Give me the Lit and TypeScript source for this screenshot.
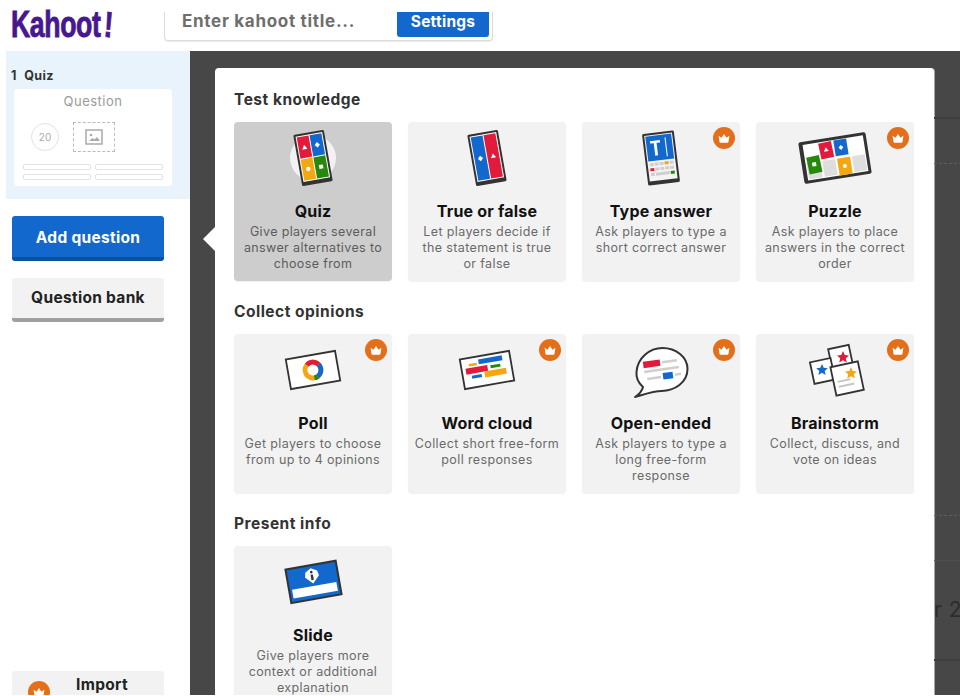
import { LitElement, html, css } from "lit";
import { customElement } from "lit/decorators.js";

const R = "#e21b3c", B = "#1368ce", Y = "#f5a70f", G = "#26890c", D = "#333333";

const crown = html`<svg class="crown" viewBox="0 0 22 22" aria-hidden="true"><circle cx="11" cy="11" r="11" fill="#e46f1b"/><path d="M5.600 8.800l2.900 1.900L11 6.900l2.500 3.800 2.900-1.900-.9 6c-.1.600-.6 1-1.200 1H7.700c-.6 0-1.100-.4-1.200-1z" fill="#fff"/></svg>`;

const icons: Record<string, unknown> = {
  quiz: html`<svg class="ico" viewBox="0 0 100 60"><circle cx="50" cy="30" r="23" fill="#f2f2f2"/><g transform="rotate(-10 50 30)"><rect x="34.500" y="4" width="31" height="52" rx="1.500" fill="${D}"/><rect x="36.500" y="6" width="27" height="46" fill="#fff"/><rect x="37.500" y="7" width="12" height="21.500" fill="${R}"/><rect x="50.500" y="7" width="12" height="21.500" fill="${B}"/><rect x="37.500" y="29.500" width="12" height="21.500" fill="${Y}"/><rect x="50.500" y="29.500" width="12" height="21.500" fill="${G}"/><path d="M43.500 15.500l2.600 4.400h-5.200z" fill="#fff"/><path d="M56.500 15l2.600 2.800-2.600 2.800-2.600-2.800z" fill="#fff"/><circle cx="43.500" cy="40" r="2.200" fill="#fff"/><rect x="54.500" y="38" width="4" height="4" fill="#fff"/></g></svg>`,
  tf: html`<svg class="ico" viewBox="0 0 100 60"><g transform="rotate(-10 50 30)"><rect x="34.500" y="4" width="31" height="52" rx="1.500" fill="${D}"/><rect x="36.500" y="6" width="27" height="46" fill="#fff"/><rect x="37.500" y="7" width="12" height="44" fill="${B}"/><rect x="50.500" y="7" width="12" height="44" fill="${R}"/><path d="M43.500 26.500l2.600 2.800-2.600 2.800-2.600-2.800z" fill="#fff"/><path d="M56.500 26.500l2.600 4.400h-5.200z" fill="#fff"/></g></svg>`,
  type: html`<svg class="ico" viewBox="0 0 100 60"><g transform="rotate(-7 50 30)"><rect x="34" y="4" width="32" height="52" rx="1.500" fill="${D}"/><rect x="36" y="6" width="28" height="46" fill="#f4f4f4"/><rect x="37" y="7" width="26" height="25" fill="${B}"/><path d="M41 12h10v2.400h-3.600V27h-2.800V14.400H41z" fill="#fff"/><rect x="56" y="10" width="1" height="19" fill="#fff"/><g fill="#cfcfcf"><rect x="38" y="34" width="4" height="3"/><rect x="43" y="34" width="4" height="3"/><rect x="48" y="34" width="4" height="3"/><rect x="58" y="34" width="4" height="3"/><rect x="43" y="39" width="4" height="3"/><rect x="48" y="39" width="4" height="3"/><rect x="53" y="39" width="4" height="3"/><rect x="58" y="39" width="4" height="3"/><rect x="38" y="44" width="4" height="3"/><rect x="43" y="44" width="14" height="3"/></g><rect x="53" y="34" width="4" height="3" fill="${Y}"/><rect x="38" y="39" width="4" height="3" fill="${R}"/><rect x="58" y="44" width="4" height="3" fill="${G}"/></g></svg>`,
  puzzle: html`<svg class="ico" viewBox="0 0 100 60"><g transform="rotate(-9 50 30)"><rect x="16" y="9" width="68" height="42" rx="2" fill="${D}"/><rect x="20" y="12" width="61" height="36" fill="#fff"/><g fill="#dedede"><rect x="21" y="31" width="14" height="16"/><rect x="37" y="31" width="13" height="16"/><rect x="52" y="31" width="13" height="16"/><rect x="67" y="31" width="13" height="16"/></g><rect x="36" y="13" width="13" height="16" fill="${R}" transform="rotate(-3 42 21)"/><rect x="51" y="12.500" width="13" height="16" fill="${B}"/><rect x="22" y="25" width="13" height="17" fill="${G}" transform="rotate(-3 28 33)"/><rect x="52" y="31" width="13" height="17" fill="${Y}"/><path d="M42.500 18l2.400 4h-4.800z" fill="#fff"/><path d="M57.500 18l2.400 2.500-2.400 2.500-2.400-2.500z" fill="#fff"/><rect x="26.500" y="31" width="4" height="4" fill="#fff"/><circle cx="58.500" cy="39.500" r="2" fill="#fff"/></g></svg>`,
  poll: html`<svg class="ico" viewBox="0 0 100 60"><g transform="rotate(-10 50 30)"><rect x="25" y="15" width="50" height="30" fill="#fff" stroke="${D}" stroke-width="1.800"/><g fill="none" stroke-width="4.800"><circle cx="50" cy="30" r="8" stroke="${Y}"/><path d="M44.800 24a8 8 0 0 1 11.700 1.500" stroke="${R}"/><path d="M56.500 25.500a8 8 0 0 1-3 11.700" stroke="${B}"/><path d="M53.500 37.200a8 8 0 0 1-3.500.800" stroke="${G}"/></g></g></svg>`,
  cloud: html`<svg class="ico" viewBox="0 0 100 60"><g transform="rotate(-10 50 30)"><rect x="25" y="15" width="50" height="30" fill="#fff" stroke="${D}" stroke-width="1.800"/><rect x="43" y="18" width="24" height="5" fill="${B}"/><rect x="33" y="21" width="8" height="2.500" fill="${Y}"/><rect x="29" y="25" width="22" height="6" fill="${R}"/><rect x="54" y="26" width="10" height="3" fill="${G}"/><rect x="34" y="33" width="10" height="3" fill="${B}"/><rect x="47" y="31" width="22" height="6" fill="${Y}"/></g></svg>`,
  open: html`<svg class="ico" viewBox="0 0 100 60"><path d="M24 57c4-2.500 7-6 8-10-4.500-4-7-9.500-6.500-15 1-14 13-24 26-24 13.500 0 25 9 25 21 0 13.500-13 22-26 22-8 0-16 3-26.500 6z" fill="#fff" stroke="${D}" stroke-width="2" stroke-linejoin="round"/><g transform="rotate(-8 52 29)"><rect x="33" y="19" width="17" height="6.500" fill="${R}"/><rect x="52" y="21" width="15" height="2.500" fill="#cfcfcf"/><rect x="33" y="28" width="35" height="2.500" fill="#cfcfcf"/><rect x="35" y="35.500" width="14" height="2.500" fill="#cfcfcf"/><rect x="51" y="33" width="10" height="6.500" fill="${B}"/><rect x="63" y="35" width="6" height="2.500" fill="#cfcfcf"/></g></svg>`,
  storm: html`<svg class="ico" viewBox="0 0 100 60"><g transform="translate(-3 0)"><g stroke="${D}" stroke-width="1.800" fill="#fff"><rect x="48" y="7" width="21" height="21" transform="rotate(-12 58 17)"/><rect x="30" y="20" width="21" height="22" transform="rotate(-12 40 31)"/><rect x="51" y="24" width="28" height="29" transform="rotate(-12 65 38)"/></g><path d="M61 11l1.800 4 4.200.400-3.200 2.900 1 4.200-3.800-2.200-3.800 2.200 1-4.200-3.200-2.900 4.200-.400z" fill="${R}"/><path d="M40 24l1.700 3.800 4.100.400-3.100 2.700.9 4-3.600-2.100-3.600 2.100.9-4-3.100-2.700 4.100-.400z" fill="${B}"/><path d="M69 27l1.800 4 4.200.400-3.200 2.900 1 4.200-3.800-2.200-3.800 2.200 1-4.200-3.200-2.900 4.200-.400z" fill="${Y}"/><g transform="rotate(-12 65 38)" fill="#c4c4c4"><rect x="55" y="39" width="13" height="1.800"/><rect x="55" y="44" width="16" height="1.800"/></g></g></svg>`,
  slide: html`<svg class="ico" viewBox="0 0 100 60"><g transform="rotate(-10 50 30)"><rect x="25" y="13" width="51" height="34" fill="${B}" stroke="${D}" stroke-width="2"/><rect x="28" y="34" width="45" height="9" fill="#fff"/><path d="M44 19.500l6-3.500 6 3.500 1 5-7 7-7-7z" fill="#fff"/><circle cx="50" cy="20" r="1.300" fill="${D}"/><rect x="48.800" y="22.500" width="2.400" height="5.500" fill="${D}"/></g></svg>`,
};

const sections = [
  {
    title: "Test knowledge",
    cards: [
      { i: "quiz", t: "Quiz", d: "Give players several answer alternatives to choose from", sel: true },
      { i: "tf", t: "True or false", d: "Let players decide if the statement is true or false" },
      { i: "type", t: "Type answer", d: "Ask players to type a short correct answer", pro: true },
      { i: "puzzle", t: "Puzzle", d: "Ask players to place answers in the correct order", pro: true },
    ],
  },
  {
    title: "Collect opinions",
    cards: [
      { i: "poll", t: "Poll", d: "Get players to choose from up to 4 opinions", pro: true },
      { i: "cloud", t: "Word cloud", d: "Collect short free-form poll responses", pro: true },
      { i: "open", t: "Open-ended", d: "Ask players to type a long free-form response", pro: true },
      { i: "storm", t: "Brainstorm", d: "Collect, discuss, and vote on ideas", pro: true },
    ],
  },
  {
    title: "Present info",
    cards: [{ i: "slide", t: "Slide", d: "Give players more context or additional explanation" }],
  },
];

@customElement("app-root")
export class AppRoot extends LitElement {
  static styles = css`
    :host {
      display: block;
      width: 960px;
      height: 696px;
      overflow: hidden;
      background: #fff;
      font-family: Inter, "Open Sans", sans-serif;
      color: #222;
    }
    .top {
      height: 51px;
      box-sizing: border-box;
      padding: 12px 0 0 11px;
      display: flex;
      align-items: flex-start;
    }
    .logo {
      width: 153px;
      height: 26px;
      font: 700 36px/25px "Liberation Sans", sans-serif;
      color: #46178f;
      -webkit-text-stroke: 0.9px #46178f;
      transform: scaleX(0.74);
      transform-origin: left center;
      white-space: nowrap;
      letter-spacing: -0.5px;
    }
    .logo span {
      display: inline-block;
      margin-left: 5px;
      transform: rotate(6deg);
    }
    .title-box {
      width: 329px;
      height: 29px;
      box-sizing: border-box;
      border: 1px solid #dcdcdc;
      border-top: 0;
      border-radius: 0 0 4px 4px;
      display: flex;
      justify-content: space-between;
      padding: 0 3px 0 17px;
      box-shadow: 0 1px 1px rgba(0, 0, 0, 0.08);
    }
    .title-box span {
      font-size: 17px;
      font-weight: 700;
      line-height: 18px;
      color: #6e6e6e;
      letter-spacing: 0.7px;
    }
    .settings {
      width: 92px;
      height: 25px;
      background: #1368ce;
      color: #fff;
      border-radius: 0 0 3px 3px;
      font-size: 15.500px;
      font-weight: 700;
      line-height: 20px;
      text-align: center;
      letter-spacing: 0.25px;
    }
    .main {
      display: flex;
      height: 644px;
      overflow: hidden;
    }
    .side {
      width: 190px;
      flex: none;
      display: flex;
      flex-direction: column;
      overflow: hidden;
    }
    .slide-item {
      margin-left: 6px;
      height: 148px;
      box-sizing: border-box;
      background: #e8f3fc;
      padding: 17px 0 0 5px;
    }
    .slide-label {
      font-size: 12.500px;
      font-weight: 700;
      line-height: 16px;
      color: #333;
      letter-spacing: 0.4px;
      word-spacing: 4px;
    }
    .thumb {
      margin: 5px 0 0 3px;
      width: 158px;
      height: 97px;
      box-sizing: border-box;
      background: #fff;
      border-radius: 3px;
      padding-top: 4px;
      display: flex;
      flex-direction: column;
      align-items: center;
    }
    .thumb-q {
      font-size: 13px;
      line-height: 16px;
      color: #9a9a9a;
      letter-spacing: 0.5px;
    }
    .thumb-mid {
      align-self: flex-start;
      display: flex;
      align-items: center;
      gap: 14px;
      margin: 13px 0 0 17px;
    }
    .timer {
      width: 26px;
      height: 26px;
      border: 1px solid #e2e2e2;
      border-radius: 50%;
      font-size: 10px;
      color: #aaa;
      display: flex;
      align-items: center;
      justify-content: center;
    }
    .media {
      width: 42px;
      height: 30px;
      box-sizing: border-box;
      border: 1px dashed #bbb;
      display: flex;
      align-items: center;
      justify-content: center;
    }
    .media svg { width: 18px; height: 16px; }
    .answers {
      margin-top: 12px;
      display: grid;
      grid-template-columns: 68px 68px;
      gap: 4px;
    }
    .answers i {
      display: block;
      height: 6px;
      border: 1px solid #e2e2e2;
      border-radius: 2px;
      box-sizing: border-box;
    }
    .btn {
      margin: 0 0 0 12px;
      width: 152px;
      box-sizing: border-box;
      border-radius: 3px;
      font-size: 15.500px;
      font-weight: 700;
      text-align: center;
      letter-spacing: 0.3px;
    }
    .add {
      margin-top: 17px;
      height: 45px;
      line-height: 43px;
      background: #1368ce;
      color: #fff;
      border-bottom: 4px solid #0e4f9e;
    }
    .bank {
      margin-top: 17px;
      height: 44px;
      line-height: 40px;
      background: #f2f2f2;
      color: #222;
      border-bottom: 4px solid #a0a0a0;
    }
    .import {
      margin-top: auto;
      height: 44px;
      flex: none;
      margin-bottom: -20px;
      background: #f2f2f2;
      display: flex;
      align-items: flex-start;
      padding: 5px 0 0 16px;
      gap: 23px;
      line-height: 18px;
      text-align: center;
    }
    .import .crown {
      position: static;
      margin-top: 5px;
      flex: none;
    }
    .import span { width: 58px; }
    .stage {
      flex: 1;
      background: #474747;
      display: flex;
      padding-left: 25px;
      position: relative;
    }
    .pointer {
      position: absolute;
      left: 13px;
      top: 176px;
      width: 0;
      height: 0;
      border: 12px solid transparent;
      border-left: 0;
      border-right-color: #fff;
    }
    .modal {
      width: 719px;
      flex: none;
      margin-top: 17px;
      margin-bottom: -20px;
      box-sizing: border-box;
      background: #fff;
      border-radius: 4px 4px 0 0;
      padding: 22px 19px 0;
      box-shadow: 1px 0 0 #a8a8a8;
    }
    h2 {
      margin: 0 0 12px;
      font-size: 15.500px;
      font-weight: 700;
      line-height: 20px;
      color: #333;
      letter-spacing: 0.5px;
    }
    .grid {
      display: grid;
      grid-template-columns: repeat(4, 158px);
      column-gap: 16px;
      margin-bottom: 21px;
    }
    .card {
      position: relative;
      height: 159px;
      box-sizing: border-box;
      background: #f2f2f2;
      border-radius: 4px;
      padding: 6px 6.500px 0;
      text-align: center;
      box-shadow: 0 1px 1px rgba(0, 0, 0, 0.06);
    }
    .card.sel { background: #cdcdcd; }
    .ico {
      display: block;
      width: 100px;
      height: 60px;
      margin: 0 auto;
    }
    .crown {
      width: 22px;
      height: 22px;
      display: block;
    }
    .card .crown {
      position: absolute;
      top: 5px;
      right: 5px;
    }
    .name {
      margin-top: 13px;
      font-size: 16px;
      line-height: 20px;
      font-weight: 700;
      color: #111;
      letter-spacing: 0.2px;
    }
    .desc {
      margin-top: 3px;
      font-size: 12.500px;
      line-height: 16px;
      color: #6a6a6a;
      letter-spacing: 0.37px;
    }
    .sel .desc { color: #5c5c5c; }
    .strip {
      flex: 1;
      overflow: hidden;
      display: grid;
      grid-template-rows: 66px 2px 44px 1px 351px 1px 44px 1px 35px 28px 1fr;
    }
    .strip .solid { background: #3e3e3e; }
    .strip .dash { border-top: 1px dashed #5f5f5f; }
    .strip .dots { border-top: 1px dotted #565656; }
    .strip .peek {
      grid-row: 10;
      font-size: 21px;
      line-height: 28px;
      color: #2c2c2c;
      white-space: nowrap;
      word-spacing: 1px;
    }
    .strip .foot { grid-row: 11; margin-top: 35px; height: 2px; background: #3e3e3e; }
  `;

  render() {
    return html`
      <div class="top">
        <div class="logo">Kahoot<span>!</span></div>
        <div class="title-box">
          <span>Enter kahoot title...</span>
          <div class="settings">Settings</div>
        </div>
      </div>
      <div class="main">
        <div class="side">
          <div class="slide-item">
            <div class="slide-label">1 Quiz</div>
            <div class="thumb">
              <div class="thumb-q">Question</div>
              <div class="thumb-mid">
                <div class="timer">20</div>
                <div class="media">
                  <svg viewBox="0 0 18 16"><rect x="1" y="1" width="16" height="14" fill="#fff" stroke="#aaa" stroke-width="1.500"/><circle cx="6" cy="6" r="1.300" fill="#aaa"/><path d="M4 12l3.500-3 2 1.500 2.500-2.500 3 4z" fill="#aaa"/></svg>
                </div>
              </div>
              <div class="answers"><i></i><i></i><i></i><i></i></div>
            </div>
          </div>
          <div class="btn add">Add question</div>
          <div class="btn bank">Question bank</div>
          <div class="btn import">${crown}<span>Import slides</span></div>
        </div>
        <div class="stage">
          <div class="pointer"></div>
          <div class="modal">
            ${sections.map(
              (s) => html`
                <h2>${s.title}</h2>
                <div class="grid">
                  ${s.cards.map(
                    (c: any) => html`
                      <div class="card ${c.sel ? "sel" : ""}">
                        ${icons[c.i]} ${c.pro ? crown : ""}
                        <div class="name">${c.t}</div>
                        <div class="desc">${c.d}</div>
                      </div>
                    `
                  )}
                </div>
              `
            )}
          </div>
          <div class="strip">
            <div></div>
            <div class="solid"></div>
            <div></div>
            <div class="dash"></div>
            <div></div>
            <div class="dash"></div>
            <div></div>
            <div class="dots"></div>
            <div></div>
            <div class="peek">r 2</div>
            <div class="foot"></div>
          </div>
        </div>
      </div>
    `;
  }
}
